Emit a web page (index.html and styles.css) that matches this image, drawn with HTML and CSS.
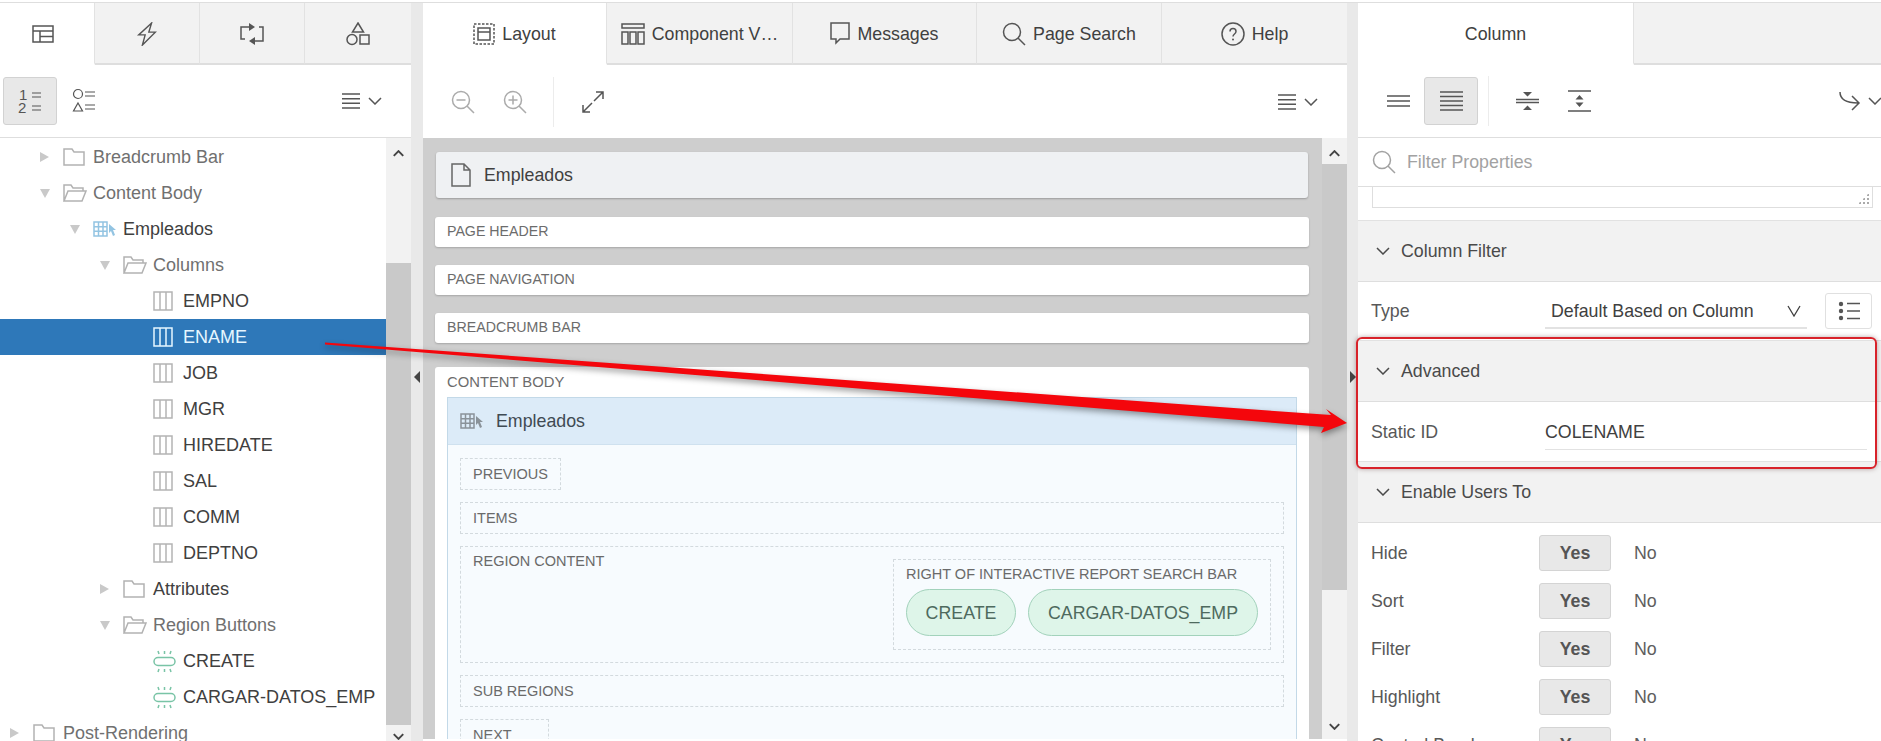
FILE: index.html
```html
<!DOCTYPE html>
<html lang="en">
<head>
<meta charset="utf-8">
<title>Page Designer</title>
<link rel="stylesheet" href="styles.css">
</head>
<body>
<svg class="sprite" xmlns="http://www.w3.org/2000/svg">
  <symbol id="i-tree" viewBox="0 0 24 20"><path d="M2 2h20v16H2zM2 7h20M9 7v11M9 12.500h13"/></symbol>
  <symbol id="i-bolt" viewBox="0 0 24 26"><path d="M17 1 3 14h7L7 25l14-14h-7z"/></symbol>
  <symbol id="i-shared" viewBox="0 0 26 24"><path d="M10 5H2v12h4M16 19h8V5h-4"/><path d="M10 1l6 4-6 4zM16 15l-6 4 6 4z" fill="currentColor" stroke="none"/></symbol>
  <symbol id="i-shapes" viewBox="0 0 24 24"><path d="M12 1l5.500 9h-11zM14 13h9v9h-9z"/><circle cx="6" cy="17.500" r="5"/></symbol>
  <symbol id="i-num" viewBox="0 0 24 26"><text x="1" y="12" class="num">1</text><text x="0" y="25" class="num">2</text><path d="M14 5h9M14 9h9M14 18h9M14 22h9"/></symbol>
  <symbol id="i-shape-list" viewBox="0 0 24 26"><circle cx="6" cy="6" r="4.500"/><path d="M6 15l4.500 8h-9zM13 4h10M13 8h10M13 17h10M13 21h10"/></symbol>
  <symbol id="i-lines4" viewBox="0 0 18 16"><path d="M0 1h18M0 5.700h18M0 10.300h18M0 15h18"/></symbol>
  <symbol id="i-chev" viewBox="0 0 14 8"><path d="M1 1l6 6 6-6"/></symbol>
  <symbol id="i-vee" viewBox="0 0 14 12"><path d="M1 1l6 10 6-10"/></symbol>
  <symbol id="i-layout" viewBox="0 0 22 22"><path d="M1 1h20v20H1z" stroke-dasharray="2.500 1.500"/><path d="M5 5h12v12H5zM5 9h12"/></symbol>
  <symbol id="i-comp" viewBox="0 0 24 22"><path d="M1 1h22v4H1zM1 9h6v12H1zM9 9h6v12H9zM17 9h6v12h-6z"/></symbol>
  <symbol id="i-msg" viewBox="0 0 20 23"><path d="M1 1h18v16H10l-4 4v-4H1z"/></symbol>
  <symbol id="i-search" viewBox="0 0 24 24"><circle cx="10" cy="10" r="8.500"/><path d="M16 16l7 7"/></symbol>
  <symbol id="i-help" viewBox="0 0 24 24"><circle cx="12" cy="12" r="11"/><path d="M9 9.500c0-4 6-4 6 0 0 2.500-3 2.500-3 5"/><circle cx="12" cy="17.500" r="1" fill="currentColor" stroke="none"/></symbol>
  <symbol id="i-zoom-out" viewBox="0 0 24 24"><circle cx="10" cy="10" r="8.500"/><path d="M16 16l7 7M5.500 10h9"/></symbol>
  <symbol id="i-zoom-in" viewBox="0 0 24 24"><circle cx="10" cy="10" r="8.500"/><path d="M16 16l7 7M5.500 10h9M10 5.500v9"/></symbol>
  <symbol id="i-expand" viewBox="0 0 24 24"><path d="M13 11L22 2M15 2h7v7M11 13l-9 9M2 15v7h7"/></symbol>
  <symbol id="i-lines2" viewBox="0 0 23 12"><path d="M0 1h23M0 6h23M0 11h23"/></symbol>
  <symbol id="i-lines5" viewBox="0 0 23 20"><path d="M0 1h23M0 5.500h23M0 10h23M0 14.500h23M0 19h23"/></symbol>
  <symbol id="i-collapse" viewBox="0 0 23 20"><path d="M0 8.500h23M0 11.500h23"/><path d="M7 1h9l-4.500 4.500zM7 19h9l-4.500-4.500z" fill="currentColor" stroke="none"/></symbol>
  <symbol id="i-expand-row" viewBox="0 0 23 22"><path d="M0 1h23M0 21h23"/><path d="M7.500 9.500h8L11.500 5zM7.500 12.500h8L11.500 17z" fill="currentColor" stroke="none"/></symbol>
  <symbol id="i-goto" viewBox="0 0 22 20"><path d="M1 1c0 8 6 11 18 11M13 5l7 7-7 7"/></symbol>
  <symbol id="i-folder" viewBox="0 0 22 18"><path d="M1 17V1h8l2 3h10v13z"/></symbol>
  <symbol id="i-folder-open" viewBox="0 0 24 18"><path d="M1 17V1h7l2 3h10v3M1 17l4-10h18l-4 10z"/></symbol>
  <symbol id="i-col" viewBox="0 0 20 20"><path d="M1 1h18v18H1zM7 1v18M13 1v18"/></symbol>
  <symbol id="i-btn" viewBox="0 0 23 23"><rect x="1" y="7.500" width="21" height="8" rx="4"/><path d="M5 1l1 3M11.500 1v3M18 1l-1 3M5 22l1-3M11.500 22v-3M18 22l-1-3"/></symbol>
  <symbol id="i-report" viewBox="0 0 24 18"><path d="M1 2h13v14H1zM1 6.700h13M1 11.300h13M5.500 2v14M10 2v14"/><path d="M16 4l7 6h-3l2 5-2 1-2-5-2 2z" fill="currentColor" stroke="none"/></symbol>
  <symbol id="i-page" viewBox="0 0 20 24"><path d="M1 1h12l6 6v16H1zM13 1v6h6"/></symbol>
  <symbol id="i-list-btn" viewBox="0 0 22 20"><circle cx="3" cy="3" r="2.200" fill="currentColor" stroke="none"/><circle cx="3" cy="10" r="2.200" fill="currentColor" stroke="none"/><circle cx="3" cy="17" r="2.200" fill="currentColor" stroke="none"/><path d="M9 2.500h13M9 10h13M9 17.500h13"/></symbol>
</svg>

<div class="app">
  <section class="pane">
    <div class="tabs">
      <div class="tab active t-95 t-first"><svg class="ic i24"><use href="#i-tree"/></svg></div>
      <div class="tab t-105"><svg class="ic i24"><use href="#i-bolt"/></svg></div>
      <div class="tab t-105"><svg class="ic i26"><use href="#i-shared"/></svg></div>
      <div class="tab t-grow"><svg class="ic i24"><use href="#i-shapes"/></svg></div>
    </div>
    <div class="toolbar">
      <div class="tbtn on"><svg class="ic i-num"><use href="#i-num"/></svg></div>
      <div class="tbtn"><svg class="ic i-num"><use href="#i-shape-list"/></svg></div>
      <div class="menu"><svg class="ic i-menu"><use href="#i-lines4"/></svg><svg class="ic i-chev"><use href="#i-chev"/></svg></div>
    </div>
    <div class="split-body">
      <div class="tree">
        <div class="row l1 muted"><span class="tg right"></span><svg class="ic fold"><use href="#i-folder"/></svg><span class="txt">Breadcrumb Bar</span></div>
        <div class="row l1 muted"><span class="tg down"></span><svg class="ic fold open"><use href="#i-folder-open"/></svg><span class="txt">Content Body</span></div>
        <div class="row l2"><span class="tg down"></span><svg class="ic rep"><use href="#i-report"/></svg><span class="txt">Empleados</span></div>
        <div class="row l3 muted"><span class="tg down"></span><svg class="ic fold open"><use href="#i-folder-open"/></svg><span class="txt">Columns</span></div>
        <div class="row l4"><span class="tg"></span><svg class="ic col"><use href="#i-col"/></svg><span class="txt">EMPNO</span></div>
        <div class="row l4 sel"><span class="tg"></span><svg class="ic col"><use href="#i-col"/></svg><span class="txt">ENAME</span></div>
        <div class="row l4"><span class="tg"></span><svg class="ic col"><use href="#i-col"/></svg><span class="txt">JOB</span></div>
        <div class="row l4"><span class="tg"></span><svg class="ic col"><use href="#i-col"/></svg><span class="txt">MGR</span></div>
        <div class="row l4"><span class="tg"></span><svg class="ic col"><use href="#i-col"/></svg><span class="txt">HIREDATE</span></div>
        <div class="row l4"><span class="tg"></span><svg class="ic col"><use href="#i-col"/></svg><span class="txt">SAL</span></div>
        <div class="row l4"><span class="tg"></span><svg class="ic col"><use href="#i-col"/></svg><span class="txt">COMM</span></div>
        <div class="row l4"><span class="tg"></span><svg class="ic col"><use href="#i-col"/></svg><span class="txt">DEPTNO</span></div>
        <div class="row l3"><span class="tg right"></span><svg class="ic fold"><use href="#i-folder"/></svg><span class="txt">Attributes</span></div>
        <div class="row l3 muted"><span class="tg down"></span><svg class="ic fold open"><use href="#i-folder-open"/></svg><span class="txt">Region Buttons</span></div>
        <div class="row l4"><span class="tg"></span><svg class="ic btn"><use href="#i-btn"/></svg><span class="txt">CREATE</span></div>
        <div class="row l4"><span class="tg"></span><svg class="ic btn"><use href="#i-btn"/></svg><span class="txt">CARGAR-DATOS_EMP</span></div>
        <div class="row l0 muted"><span class="tg right"></span><svg class="ic fold"><use href="#i-folder"/></svg><span class="txt">Post-Rendering</span></div>
      </div>
      <div class="scroll scroll-left">
        <div class="sb-btn"><svg class="ic sb-chev up"><use href="#i-chev"/></svg></div>
        <div class="thumb"></div>
        <div class="sb-btn"><svg class="ic sb-chev"><use href="#i-chev"/></svg></div>
      </div>
    </div>
  </section>

  <div class="splitter"><span class="arr-l"></span></div>

  <section class="pane">
    <div class="tabs">
      <div class="tab active t-184"><svg class="ic i22"><use href="#i-layout"/></svg><span class="tab-txt">Layout</span></div>
      <div class="tab t-186"><svg class="ic i-comp"><use href="#i-comp"/></svg><span class="tab-txt">Component V…</span></div>
      <div class="tab t-184"><svg class="ic i-msg"><use href="#i-msg"/></svg><span class="tab-txt">Messages</span></div>
      <div class="tab t-185"><svg class="ic i24"><use href="#i-search"/></svg><span class="tab-txt">Page Search</span></div>
      <div class="tab t-grow"><svg class="ic i24"><use href="#i-help"/></svg><span class="tab-txt">Help</span></div>
    </div>
    <div class="toolbar toolbar-c">
      <div class="tbtn-c dim"><svg class="ic i24"><use href="#i-zoom-out"/></svg></div>
      <div class="tbtn-c dim"><svg class="ic i24"><use href="#i-zoom-in"/></svg></div>
      <div class="sep"></div>
      <div class="tbtn-c"><svg class="ic i24"><use href="#i-expand"/></svg></div>
      <div class="menu"><svg class="ic i-menu"><use href="#i-lines4"/></svg><svg class="ic i-chev"><use href="#i-chev"/></svg></div>
    </div>
    <div class="split-body stage-wrap">
      <div class="stage">
        <div class="page-title"><svg class="ic i-page"><use href="#i-page"/></svg><span>Empleados</span></div>
        <div class="slot">PAGE HEADER</div>
        <div class="slot">PAGE NAVIGATION</div>
        <div class="slot slot-last">BREADCRUMB BAR</div>
        <div class="body-slot">
          <div class="body-label">CONTENT BODY</div>
          <div class="region">
            <div class="region-head"><svg class="ic rep-g"><use href="#i-report"/></svg><span>Empleados</span></div>
            <div class="region-body">
              <div class="dz dz-prev">PREVIOUS</div>
              <div class="dz">ITEMS</div>
              <div class="dz dz-content">
                <div>REGION CONTENT</div>
                <div class="dz-right">
                  <div>RIGHT OF INTERACTIVE REPORT SEARCH BAR</div>
                  <div class="chips"><span class="chip chip-a">CREATE</span><span class="chip chip-b">CARGAR-DATOS_EMP</span></div>
                </div>
              </div>
              <div class="dz">SUB REGIONS</div>
              <div class="dz dz-next">NEXT</div>
            </div>
          </div>
        </div>
      </div>
      <div class="scroll scroll-center">
        <div class="sb-btn"><svg class="ic sb-chev up"><use href="#i-chev"/></svg></div>
        <div class="thumb"></div>
        <div class="sb-btn"><svg class="ic sb-chev"><use href="#i-chev"/></svg></div>
      </div>
    </div>
  </section>

  <div class="splitter"><span class="arr-r"></span></div>

  <section class="pane">
    <div class="tabs">
      <div class="tab active t-276"><span class="tab-txt">Column</span></div>
      <div class="tab t-grow last"></div>
    </div>
    <div class="toolbar toolbar-r">
      <div class="tbtn-r"><svg class="ic i-l2"><use href="#i-lines2"/></svg></div>
      <div class="tbtn-r on"><svg class="ic i-l5"><use href="#i-lines5"/></svg></div>
      <div class="sep sep-r"></div>
      <div class="tbtn-r"><svg class="ic i-l5"><use href="#i-collapse"/></svg></div>
      <div class="tbtn-r"><svg class="ic i-l5b"><use href="#i-expand-row"/></svg></div>
      <div class="menu menu-r"><svg class="ic i-goto"><use href="#i-goto"/></svg><svg class="ic i-chev"><use href="#i-chev"/></svg></div>
    </div>
    <div class="filter"><svg class="ic i24"><use href="#i-search"/></svg><span>Filter Properties</span></div>
    <div class="ta-wrap"><div class="ta"><span class="grip"></span></div></div>

    <div class="sec"><svg class="ic i-chev"><use href="#i-chev"/></svg><span>Column Filter</span></div>
    <div class="field f-type">
      <label>Type</label>
      <div class="select"><span>Default Based on Column</span><svg class="ic i-sel"><use href="#i-vee"/></svg></div>
      <div class="lov"><svg class="ic i-lov"><use href="#i-list-btn"/></svg></div>
    </div>
    <div class="sec"><svg class="ic i-chev"><use href="#i-chev"/></svg><span>Advanced</span></div>
    <div class="field f-id">
      <label>Static ID</label>
      <div class="input">COLENAME</div>
    </div>
    <div class="sec"><svg class="ic i-chev"><use href="#i-chev"/></svg><span>Enable Users To</span></div>
    <div class="yn-list">
      <div class="yn"><label>Hide</label><span class="yes">Yes</span><span class="no">No</span></div>
      <div class="yn"><label>Sort</label><span class="yes">Yes</span><span class="no">No</span></div>
      <div class="yn"><label>Filter</label><span class="yes">Yes</span><span class="no">No</span></div>
      <div class="yn"><label>Highlight</label><span class="yes">Yes</span><span class="no">No</span></div>
      <div class="yn"><label>Control Break</label><span class="yes">Yes</span><span class="no">No</span></div>
    </div>
  </section>
</div>

<div class="callout"></div>
<svg class="arrow" viewBox="0 0 1881 741" xmlns="http://www.w3.org/2000/svg"><polygon points="325,342.500 1331,415 1326,409 1347,423 1321,433 1324,427 325,344.500"/></svg>
</body>
</html>
```

FILE: styles.css
```css
* { box-sizing: border-box; }
html, body { margin: 0; padding: 0; }
body {
  width: 1881px; height: 741px; overflow: hidden; position: relative;
  background: #fff; color: #404040;
  font-family: "Liberation Sans", Arial, sans-serif; font-size: 17.8px;
}
.sprite { display: none; }
.ic { fill: none; stroke: currentColor; stroke-width: 1.5; flex: none; display: block; }
.num { font: 15px "Liberation Sans", sans-serif; fill: currentColor; stroke: none; }

.app {
  display: grid; grid-template-columns: 411px 12px 924px 11px 523px;
  height: 741px; padding-top: 3px; position: relative;
}
.app::before {
  content: ""; position: absolute; left: 0; right: 0; top: 2px; height: 1px; background: #dedede;
}
.pane { display: flex; flex-direction: column; min-width: 0; height: 738px; overflow: hidden; }
.splitter { background: #e9e9e9; display: flex; align-items: flex-start; justify-content: center; padding-top: 368px; }
.arr-l { width: 0; height: 0; border: 6px solid transparent; border-right: 6px solid #444; border-left: 0; }
.arr-r { width: 0; height: 0; border: 6px solid transparent; border-left: 6px solid #444; border-right: 0; }

.tabs { display: flex; height: 62px; flex: none; }
.tab {
  display: flex; align-items: center; justify-content: center; gap: 7px;
  background: #f2f2f2; border-bottom: 2px solid #dedede; border-right: 1px solid #e2e2e2;
  color: #404040; padding-top: 1px;
}
.tab-txt { padding-top: 2px; }
.tab.active { background: #fff; border-bottom-color: #fff; }
.t-first { padding-right: 9px; }
.t-95 { width: 95px; }
.t-105 { width: 105px; }
.t-184 { width: 184px; }
.t-185 { width: 185px; }
.t-186 { width: 186px; }
.t-276 { width: 276px; }
.t-grow { flex: 1; }
.tab.t-grow { border-right: 0; }
.i24 { width: 24px; height: 24px; color: #555; }
.i26 { width: 26px; height: 24px; color: #555; }
.i22 { width: 22px; height: 22px; color: #555; }
.i-comp { width: 24px; height: 22px; color: #555; }
.i-msg { width: 20px; height: 23px; color: #555; }

.toolbar {
  height: 73px; flex: none; display: flex; align-items: center; padding: 0 3px;
  border-bottom: 1px solid #dedede; gap: 0;
}
.tbtn { width: 54px; height: 48px; display: flex; align-items: center; justify-content: center; color: #555; }
.tbtn.on, .tbtn-r.on { background: #e8e8e8; border: 1px solid #d2d2d2; border-radius: 3px; }
.i-num { width: 24px; height: 26px; stroke-width: 1.2; }
.menu { margin-left: auto; display: flex; align-items: center; gap: 8px; color: #555; padding-right: 26px; }
.i-menu { width: 18px; height: 16px; }
.i-chev { width: 14px; height: 8px; }

.toolbar-c { padding: 0 0 0 28px; border-bottom: 0; }
.toolbar-c .menu { padding-right: 29px; }
.tbtn-c { width: 24px; height: 24px; margin-right: 28px; color: #555; }
.tbtn-c.dim { margin-right: 28px; }
.tbtn-c.dim .ic { color: #ababab; }
.tbtn-c.dim + .tbtn-c.dim { margin-right: 26px; }
.sep { width: 1px; height: 50px; background: #ececec; margin-right: 27px; }

.toolbar-r { padding: 0 0 0 29px; }
.tbtn-r { display: flex; align-items: center; justify-content: center; color: #555; }
.toolbar-r .tbtn-r:nth-child(1) { width: 23px; margin-right: 14px; }
.toolbar-r .tbtn-r:nth-child(2) { width: 54px; height: 48px; margin-right: 10px; }
.sep-r { margin-right: 27px; }
.toolbar-r .tbtn-r:nth-child(4) { width: 23px; margin-right: 29px; }
.toolbar-r .tbtn-r:nth-child(5) { width: 23px; }
.i-l2 { width: 23px; height: 12px; }
.i-l5 { width: 23px; height: 20px; }
.i-l5b { width: 23px; height: 22px; }
.menu-r { padding-right: 0; margin-right: -1px; gap: 7px; }
.i-goto { width: 22px; height: 20px; }

.split-body { flex: 1; display: flex; min-height: 0; }
.tree { flex: 1; padding-top: 1px; overflow: hidden; min-width: 0; font-size: 18px; }
.row { height: 36px; display: flex; align-items: center; white-space: nowrap; }
.txt { padding-top: 1px; }
.row.muted { color: #707070; }
.row.sel { background: #2e78b9; color: #e6f6ff; }
.row.sel .col { color: #e6f6ff; }
.l0 { padding-left: 10px; }
.l1 { padding-left: 40px; }
.l2 { padding-left: 70px; }
.l3 { padding-left: 100px; }
.l4 { padding-left: 130px; }
.tg { width: 23px; flex: none; display: block; height: 10px; position: relative; }
.tg.right::before {
  content: ""; display: block; width: 0; height: 0;
  border-left: 9px solid #c9c9c9; border-top: 5px solid transparent; border-bottom: 5px solid transparent;
}
.tg.down::before {
  content: ""; display: block; width: 0; height: 0; margin-top: 1px;
  border-top: 9px solid #c9c9c9; border-left: 5.500px solid transparent; border-right: 5.500px solid transparent;
}
.fold { width: 22px; height: 18px; margin-right: 8px; color: #b2b2b2; }
.fold.open { width: 24px; margin-right: 6px; }
.rep { width: 24px; height: 18px; margin-right: 6px; color: #93c4e2; }
.col { width: 20px; height: 20px; margin-right: 10px; color: #b4b4b4; }
.btn { width: 23px; height: 23px; margin-right: 7px; color: #79c4a6; }

.scroll { width: 25px; flex: none; background: #f2f2f2; display: flex; flex-direction: column; }
.sb-btn { display: flex; justify-content: center; color: #444; }
.sb-chev { width: 11px; height: 7px; stroke-width: 2.500; }
.sb-chev.up { transform: rotate(180deg); }
.thumb { background: #c9c9c9; }
.scroll-left .sb-btn:first-child { padding-top: 12px; height: 125px; }
.scroll-left .thumb { height: 462px; }
.scroll-left .sb-btn:last-child { padding-top: 8px; height: 16px; }
.scroll-center .sb-btn:first-child { padding-top: 12px; height: 26px; }
.scroll-center .thumb { height: 426px; }
.scroll-center .sb-btn:last-child { padding-top: 133px; flex: 1; }

.stage-wrap { background: #fff; margin-bottom: 2px; }
.stage { flex: 1; background: #cecece; padding: 14px 13px 0 12px; overflow: hidden; min-width: 0; }
.page-title {
  height: 46px; margin: 0 1px 19px; background: #eff1f3; border-radius: 3px;
  display: flex; align-items: center; box-shadow: 0 1px 2px rgba(0,0,0,.25); padding-left: 15px; gap: 13px;
}
.i-page { width: 20px; height: 24px; color: #666; }
.slot {
  height: 30px; margin-bottom: 18px; background: #fff; border-radius: 3px; padding: 0 0 2px 12px;
  font-size: 14.200px; color: #6c6c6c; display: flex; align-items: center; box-shadow: 0 1px 2px rgba(0,0,0,.2);
}
.slot-last { margin-bottom: 24px; }
.body-slot { background: #fff; border-radius: 3px 3px 0 0; padding: 0 12px; height: 380px; }
.body-label { height: 30px; font-size: 14.800px; color: #6c6c6c; display: flex; align-items: center; padding-bottom: 1px; }
.region { border: 1px solid #c3d9e8; border-bottom: 0; background: #f7fbfe; height: 350px; }
.region-head {
  height: 47px; background: #dcebf8; border-bottom: 1px solid #cfe1ef; display: flex; align-items: center;
  padding-left: 12px; gap: 12px; color: #3f4a53;
}
.rep-g { width: 24px; height: 18px; color: #8a9299; }
.region-body { padding: 13px 12px 0 12px; font-size: 14.500px; color: #6a6a6a; }
.dz { border: 1px dashed #d3dade; height: 32px; margin-bottom: 12px; padding: 0 12px; display: flex; align-items: center; }
.dz-prev { width: 101px; }
.dz-next { width: 89px; }
.dz-content { height: 117px; padding: 6px 12px 0; margin-bottom: 12px; align-items: flex-start; justify-content: space-between; }
.dz-right { border: 1px dashed #d3dade; width: 378px; height: 91px; margin-top: 6px; padding: 6px 12px 0; white-space: nowrap; flex: none; }
.chips { display: flex; gap: 12px; margin-top: 7px; }
.chip {
  height: 47px; display: flex; align-items: center; justify-content: center; border-radius: 24px; padding-top: 2px;
  background: #def5e9; border: 1px solid #a2d2bb; color: #4e6a5e; font-size: 17.800px;
}
.chip-a { width: 110px; }
.chip-b { width: 230px; }

.filter { height: 49px; border-bottom: 1px solid #dedede; display: flex; align-items: center; padding-left: 14px; gap: 11px; color: #a2a2a2; flex: none; }
.filter .i24 { color: #a2a2a2; width: 24px; height: 24px; }
.ta-wrap { height: 33px; padding: 0 8px 12px 14px; flex: none; }
.ta { height: 21px; border: 1px solid #dedede; border-top: 0; position: relative; }
.grip {
  position: absolute; right: 3px; bottom: 3px; width: 11px; height: 11px;
  background: radial-gradient(circle, #aaa 1.100px, transparent 1.200px) 0 0 / 4px 4px;
  clip-path: polygon(100% 0, 100% 100%, 0 100%);
}
.sec {
  height: 62px; background: #f2f2f2; border-top: 1px solid #e2e2e2; border-bottom: 1px solid #dedede;
  display: flex; align-items: center; padding-left: 18px; gap: 11px; color: #4a4a4a; flex: none;
}
.field { display: flex; align-items: center; flex: none; padding-left: 13px; position: relative; }
.field label, .yn label { width: 174px; color: #585858; flex: none; }
.f-type { height: 58px; }
.f-id { height: 59px; padding-top: 2px; }
.select { width: 262px; height: 34px; border-bottom: 2px solid #e2e2e2; display: flex; align-items: center; padding-left: 6px; margin-top: 2px; flex: none; }
.i-sel { margin-left: 33px; width: 14px; height: 12px; stroke-width: 1.300; }
.lov { width: 47px; height: 36px; margin-left: 18px; border: 1px solid #e0e0e0; border-radius: 3px; display: flex; align-items: center; justify-content: center; color: #555; }
.i-lov { width: 22px; height: 20px; }
.input { width: 322px; height: 33px; border-bottom: 1px solid #e2e2e2; margin-top: 1px; display: flex; align-items: center; }
.yn-list { padding-top: 12px; }
.yn { display: flex; align-items: center; height: 36px; margin-bottom: 12px; padding-left: 13px; white-space: nowrap; }
.yn label { width: 168px; }
.yes {
  width: 72px; height: 36px; background: #e8e8e8; border: 1px solid #d4d4d4; border-radius: 3px; font-weight: bold;
  display: flex; align-items: center; justify-content: center; color: #555; flex: none;
}
.no { margin-left: 23px; color: #5e5e5e; }

.callout {
  position: absolute; left: 1356px; top: 337px; width: 521px; height: 132px;
  border: 2px solid #d8222a; border-radius: 6px; box-shadow: 0 0 5px rgba(60,0,0,.35);
}
.arrow { position: absolute; left: 0; top: 0; width: 1881px; height: 741px; pointer-events: none; }
.arrow polygon { fill: #f4060c; filter: drop-shadow(0 3px 3px rgba(0,0,0,.4)); }
```
